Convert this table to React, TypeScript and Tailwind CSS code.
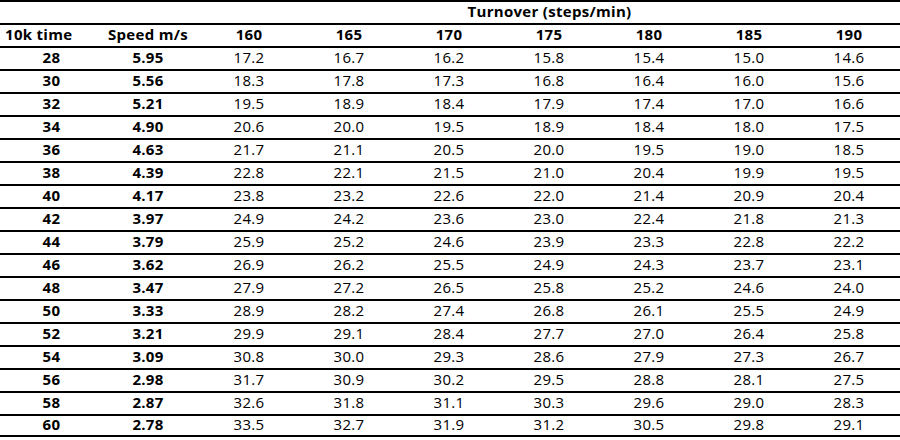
const CADENCES = [160, 165, 170, 175, 180, 185, 190];

// [10k time, speed, ...turnover values]
const ROWS: [string, string, string[]][] = [
  ["28", "5.95", ["17.2", "16.7", "16.2", "15.8", "15.4", "15.0", "14.6"]],
  ["30", "5.56", ["18.3", "17.8", "17.3", "16.8", "16.4", "16.0", "15.6"]],
  ["32", "5.21", ["19.5", "18.9", "18.4", "17.9", "17.4", "17.0", "16.6"]],
  ["34", "4.90", ["20.6", "20.0", "19.5", "18.9", "18.4", "18.0", "17.5"]],
  ["36", "4.63", ["21.7", "21.1", "20.5", "20.0", "19.5", "19.0", "18.5"]],
  ["38", "4.39", ["22.8", "22.1", "21.5", "21.0", "20.4", "19.9", "19.5"]],
  ["40", "4.17", ["23.8", "23.2", "22.6", "22.0", "21.4", "20.9", "20.4"]],
  ["42", "3.97", ["24.9", "24.2", "23.6", "23.0", "22.4", "21.8", "21.3"]],
  ["44", "3.79", ["25.9", "25.2", "24.6", "23.9", "23.3", "22.8", "22.2"]],
  ["46", "3.62", ["26.9", "26.2", "25.5", "24.9", "24.3", "23.7", "23.1"]],
  ["48", "3.47", ["27.9", "27.2", "26.5", "25.8", "25.2", "24.6", "24.0"]],
  ["50", "3.33", ["28.9", "28.2", "27.4", "26.8", "26.1", "25.5", "24.9"]],
  ["52", "3.21", ["29.9", "29.1", "28.4", "27.7", "27.0", "26.4", "25.8"]],
  ["54", "3.09", ["30.8", "30.0", "29.3", "28.6", "27.9", "27.3", "26.7"]],
  ["56", "2.98", ["31.7", "30.9", "30.2", "29.5", "28.8", "28.1", "27.5"]],
  ["58", "2.87", ["32.6", "31.8", "31.1", "30.3", "29.6", "29.0", "28.3"]],
  ["60", "2.78", ["33.5", "32.7", "31.9", "31.2", "30.5", "29.8", "29.1"]],
];

const row = "flex h-[23px] border-t-2 border-black items-center pb-[3px]";

export default function App() {
  return (
    <div className="w-[900px] h-[440px] bg-white text-black text-[15px] leading-none tracking-[0.3px] font-['Open_Sans',sans-serif]">
      {/* Title row */}
      <div className={row}>
        <div className="w-[199px]" />
        <div className="flex-1 text-center font-bold">Turnover (steps/min)</div>
      </div>

      {/* Column headers */}
      <div className={`${row} font-bold`}>
        <div className="w-[97px] pl-[5px] whitespace-nowrap">10k time</div>
        <div className="w-[102px] text-center whitespace-nowrap">Speed m/s</div>
        {CADENCES.map((c) => (
          <div key={c} className="w-[100px] text-center">{c}</div>
        ))}
      </div>

      {ROWS.map(([time, speed, vals], i) => (
        <div key={time} className={`${row} ${i === ROWS.length - 1 ? "border-b-2" : ""}`}>
          <div className="w-[97px] pl-[6px] text-center font-bold">{time}</div>
          <div className="w-[102px] text-center font-bold">{speed}</div>
          {vals.map((v, j) => (
            <div key={j} className="w-[100px] text-center">{v}</div>
          ))}
        </div>
      ))}
    </div>
  );
}
